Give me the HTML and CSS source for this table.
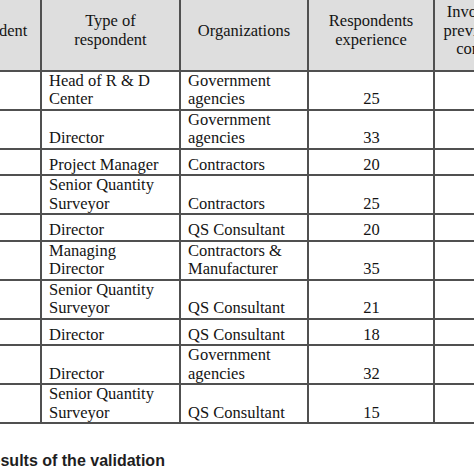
FILE: index.html
```html
<!DOCTYPE html>
<html>
<head>
<meta charset="utf-8">
<link rel="stylesheet" href="styles.css">
</head>
<body>
<div class="page">
  <table class="grid">
    <colgroup>
      <col class="c-id">
      <col class="c-type">
      <col class="c-org">
      <col class="c-exp">
      <col class="c-inv">
    </colgroup>
    <thead>
      <tr>
        <th>Respondent</th>
        <th class="wrap">Type of respondent</th>
        <th>Organizations</th>
        <th>Respondents experience</th>
        <th>Involvement in previous similar construction</th>
      </tr>
    </thead>
    <tbody>
      <tr><td class="num">1</td><td>Head of R &amp; D Center</td><td>Government agencies</td><td class="num">25</td><td></td></tr>
      <tr><td class="num">2</td><td>Director</td><td>Government agencies</td><td class="num">33</td><td></td></tr>
      <tr class="one"><td class="num">3</td><td>Project Manager</td><td>Contractors</td><td class="num">20</td><td></td></tr>
      <tr><td class="num">4</td><td>Senior Quantity Surveyor</td><td>Contractors</td><td class="num">25</td><td></td></tr>
      <tr class="one"><td class="num">5</td><td>Director</td><td>QS Consultant</td><td class="num">20</td><td></td></tr>
      <tr><td class="num">6</td><td>Managing Director</td><td>Contractors &amp; Manufacturer</td><td class="num">35</td><td></td></tr>
      <tr><td class="num">7</td><td>Senior Quantity Surveyor</td><td>QS Consultant</td><td class="num">21</td><td></td></tr>
      <tr class="one"><td class="num">8</td><td>Director</td><td>QS Consultant</td><td class="num">18</td><td></td></tr>
      <tr><td class="num">9</td><td>Director</td><td>Government agencies</td><td class="num">32</td><td></td></tr>
      <tr><td class="num">10</td><td>Senior Quantity Surveyor</td><td>QS Consultant</td><td class="num">15</td><td></td></tr>
    </tbody>
  </table>
  <h2 class="caption">Results of the validation</h2>
</div>
</body>
</html>
```

FILE: styles.css
```css
html, body {
  margin: 0;
  padding: 0;
  background: #ffffff;
}

.page {
  width: 474px;
  height: 474px;
  overflow: hidden;
}

.grid {
  margin-left: -65px;
  border-collapse: collapse;
  table-layout: fixed;
  width: 624px;
  font-family: "Liberation Serif", "Times New Roman", serif;
  font-size: 16.5px;
  line-height: 18.5px;
  color: #141414;
}

.c-id { width: 105px; }
.c-type { width: 139px; }
.c-org { width: 128px; }
.c-exp { width: 126px; }
.c-inv { width: 126px; }

.grid th,
.grid td {
  border: 2px solid #505050;
}

.grid th {
  border-top: none;
  background: #dedede;
  font-weight: normal;
  text-align: center;
  vertical-align: middle;
  padding: 3px 4px 11px;
}

.grid th.wrap {
  padding-left: 14px;
  padding-right: 14px;
}

.grid td {
  text-align: left;
  vertical-align: bottom;
  padding: 0 6px 0 7px;
}

.grid td.num {
  text-align: center;
}

.grid tr.one td {
  padding-top: 6px;
}

.caption {
  margin: 28px 0 0 -20px;
  font-family: "Liberation Sans", Arial, sans-serif;
  font-weight: bold;
  font-size: 16px;
  line-height: 18.4px;
  color: #1e1e1e;
}
```
